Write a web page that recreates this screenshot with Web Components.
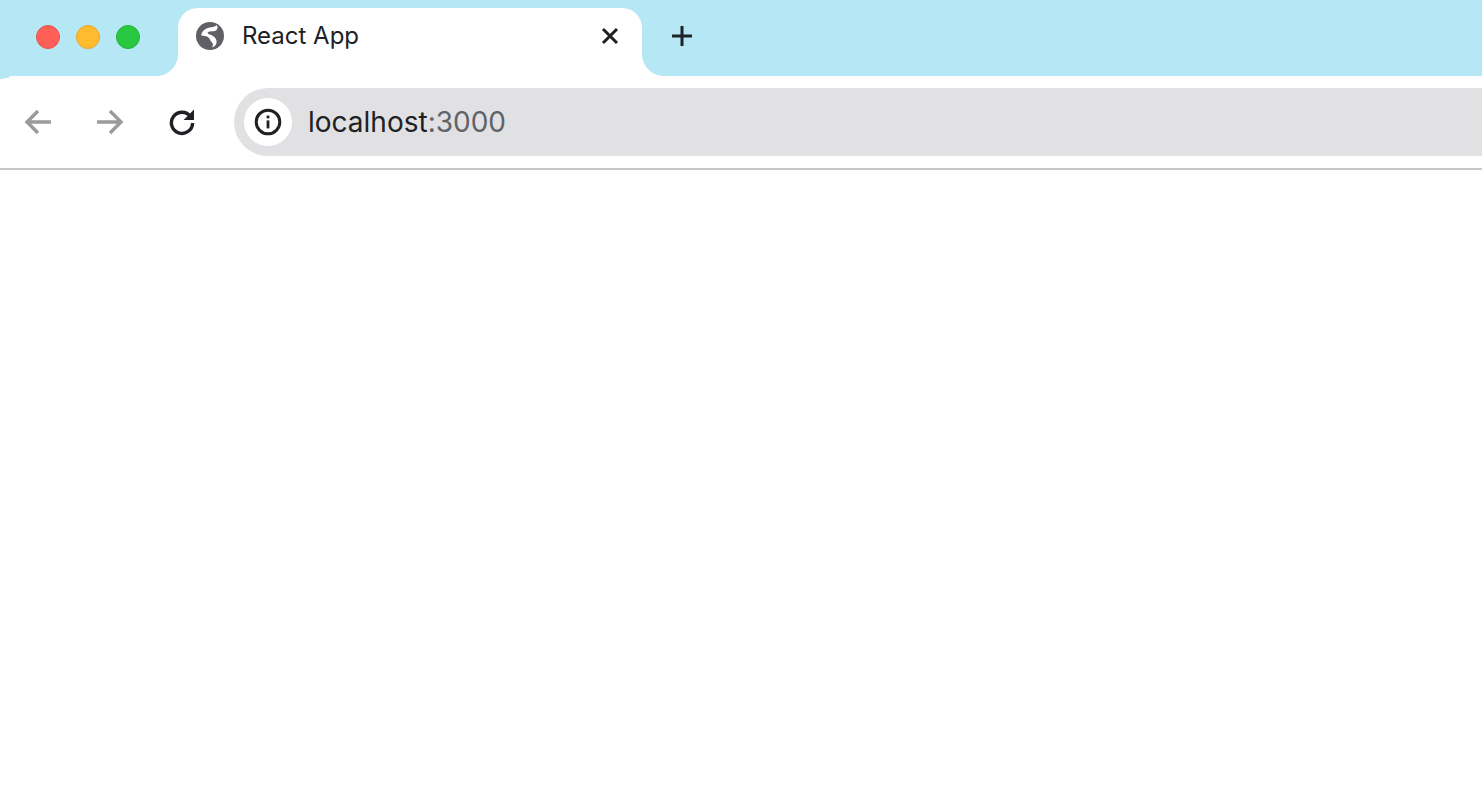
<!DOCTYPE html>
<html>
<head>
<meta charset="utf-8">
<title>React App</title>
<style>
    html, body { margin: 0; height: 100%; background: #fff; }
    body { font-family: "Inter", "Liberation Sans", sans-serif; }
</style>
</head>
<body>
<browser-window>
    <tab-strip>
        <traffic-light color="#fe5f57" edge="#e8544e"></traffic-light>
        <traffic-light color="#febc2e" edge="#e5a928"></traffic-light>
        <traffic-light color="#28c840" edge="#22b338"></traffic-light>
        <browser-tab slot="tab">React App</browser-tab>
    </tab-strip>
    <nav-toolbar>
        <omni-box host-name="localhost" port=":3000"></omni-box>
    </nav-toolbar>
</browser-window>

<script>
class BrowserWindow extends HTMLElement {
    connectedCallback() {
        this.shadow = this.attachShadow({ mode: "open" });
        this.shadow.innerHTML = `
            <style>
                :host { display: flex; flex-direction: column; height: 100vh; background: #fff; }
            </style>
            <slot></slot>
        `;
    }
}

class TabStrip extends HTMLElement {
    connectedCallback() {
        this.shadow = this.attachShadow({ mode: "open" });
        this.shadow.innerHTML = `
            <style>
                :host { display: flex; align-items: flex-end; height: 76px; background: #b6e7f5; flex: none; }
                .lights { display: flex; gap: 16px; align-self: flex-start; padding: 25px 0 0 36px; width: 178px; box-sizing: border-box; }
                .new-tab { display: flex; align-self: flex-start; margin: 24px 0 0 28px; }
            </style>
            <div class="lights"><slot></slot></div>
            <slot name="tab"></slot>
            <div class="new-tab">
                <svg width="24" height="24" viewBox="0 0 24 24" fill="none" stroke="#1f2328" stroke-width="3">
                    <path d="M12 2v20M2 12h20"/>
                </svg>
            </div>
        `;
    }
}

class TrafficLight extends HTMLElement {
    connectedCallback() {
        this.shadow = this.attachShadow({ mode: "open" });
        this.shadow.innerHTML = `
            <style>
                :host { display: block; width: 24px; height: 24px; border-radius: 50%; box-sizing: border-box; }
            </style>
        `;
        this.style.background = this.getAttribute("color");
        this.style.border = "1px solid " + this.getAttribute("edge");
    }
}

class BrowserTab extends HTMLElement {
    connectedCallback() {
        this.shadow = this.attachShadow({ mode: "open" });
        this.shadow.innerHTML = `
            <style>
                :host { display: flex; align-items: center; position: relative; box-sizing: border-box; width: 464px; height: 68px;
                    padding: 0 22px 12px 18px; background: #fff; border-radius: 20px 20px 0 0; }
                :host::before, :host::after { content: ""; position: absolute; bottom: 0; width: 22px; height: 22px; }
                :host::before { left: -22px; background: radial-gradient(circle at 0 0, transparent 21.5px, #fff 22.5px); }
                :host::after { right: -22px; background: radial-gradient(circle at 100% 0, transparent 21.5px, #fff 22.5px); }
                .globe { flex: none; display: block; }
                .title { flex: 1; margin-left: 18px; font-size: 24px; line-height: 32px; color: #202124; white-space: nowrap; }
                .close { flex: none; display: block; }
            </style>
            <svg class="globe" width="28" height="28" viewBox="0 0 28 28">
                <circle cx="14" cy="14" r="14" fill="#5f6066"/>
                <path fill="#fff" d="M21 3.2C18 5.5 14 5 11 6.2 8 7.5 5.5 10 5.2 13.5 8 13.6 10.5 14 12.5 15.5 14.5 17 14 19 15.5 20 17 21 17.5 23 16 25.5 18.5 24.5 20 23.5 20.5 21 21 18 19.5 15.5 17 14 14.5 12.5 12 12.5 11.5 10.5 13.5 8.5 17 10 20 8.5 21.5 7.5 22 5 21 3.2Z"/>
            </svg>
            <span class="title"><slot></slot></span>
            <svg class="close" width="20" height="20" viewBox="0 0 20 20" fill="none" stroke="#202124" stroke-width="3">
                <path d="M3 3l14 14M17 3L3 17"/>
            </svg>
        `;
    }
}

class NavToolbar extends HTMLElement {
    connectedCallback() {
        this.shadow = this.attachShadow({ mode: "open" });
        this.shadow.innerHTML = `
            <style>
                :host { display: flex; align-items: center; position: relative; box-sizing: border-box; height: 94px; flex: none; padding: 0 0 0 24px;
                    background: #fff; border-bottom: 2px solid #c8c8cc; }
                :host::before { content: ""; position: absolute; top: 0; left: 0; width: 10px; height: 3px; background: #b6e7f5; border-radius: 0 0 100% 0; }
                svg { flex: none; display: block; }
                .forward { margin-left: 44px; }
                .reload { margin-left: 44px; margin-right: 38px; }
            </style>
            <svg width="28" height="28" viewBox="0 0 28 28" fill="none" stroke="#9b9b9e" stroke-width="3.4">
                <path d="M27 14H4M14 3L3 14l11 11"/>
            </svg>
            <svg class="forward" width="28" height="28" viewBox="0 0 28 28" fill="none" stroke="#9b9b9e" stroke-width="3.4">
                <path d="M1 14h23M14 3l11 11-11 11"/>
            </svg>
            <svg class="reload" width="28" height="28" viewBox="0 0 28 28" fill="none">
                <path stroke="#202124" stroke-width="3.4" d="M22.6 8.6A10.6 10.6 0 1 0 24.6 15"/>
                <path fill="#202124" d="M26 1.6V12H15.6z"/>
            </svg>
            <slot></slot>
        `;
    }
}

class OmniBox extends HTMLElement {
    connectedCallback() {
        this.shadow = this.attachShadow({ mode: "open" });
        this.shadow.innerHTML = `
            <style>
                :host { display: flex; align-items: center; flex: 1; min-width: 0; box-sizing: border-box; height: 68px; padding-left: 10px;
                    background: #e1e1e3; border-radius: 34px 0 0 34px; }
                .chip { flex: none; display: flex; align-items: center; justify-content: center; width: 48px; height: 48px; border-radius: 50%; background: #fff; }
                .url { margin-left: 16px; font-size: 28px; line-height: 36px; color: #202124; white-space: nowrap; }
                .port { color: #5f6368; }
            </style>
            <div class="chip">
                <svg width="28" height="28" viewBox="0 0 28 28" fill="none">
                    <circle cx="14" cy="14" r="11.8" stroke="#202124" stroke-width="3"/>
                    <rect x="12.6" y="12.4" width="2.8" height="8" fill="#202124"/>
                    <rect x="12.6" y="7.6" width="2.8" height="2.8" fill="#202124"/>
                </svg>
            </div>
            <span class="url"></span>
        `;
        const url = this.shadow.querySelector(".url");
        url.textContent = this.getAttribute("host-name");
        const port = document.createElement("span");
        port.className = "port";
        port.textContent = this.getAttribute("port");
        url.append(port);
    }
}

customElements.define("browser-window", BrowserWindow);
customElements.define("tab-strip", TabStrip);
customElements.define("traffic-light", TrafficLight);
customElements.define("browser-tab", BrowserTab);
customElements.define("nav-toolbar", NavToolbar);
customElements.define("omni-box", OmniBox);
</script>
</body>
</html>
